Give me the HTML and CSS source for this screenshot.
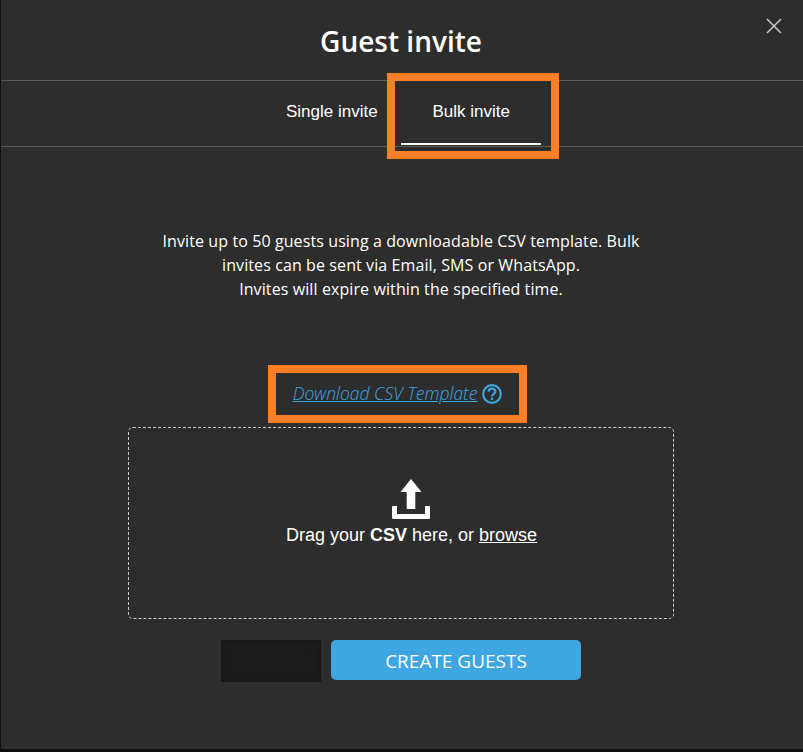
FILE: index.html
```html
<!DOCTYPE html>
<html lang="en">
<head>
    <meta charset="UTF-8">
    <title>Guest invite</title>
    <link rel="stylesheet" href="styles.css">
</head>
<body>
    <div class="modal">
        <button class="close" aria-label="Close">
            <svg width="16" height="16" viewBox="0 0 16 16"><path d="M1 1 L15 15 M15 1 L1 15" stroke="#c9c9c9" stroke-width="1.5" fill="none"/></svg>
        </button>
        <h2 class="title">Guest invite</h2>
        <div class="tabs">
            <a class="tab">Single invite</a>
            <a class="tab active">Bulk invite<span class="mark"></span></a>
        </div>
        <div class="intro">
            <p>Invite up to 50 guests using a downloadable CSV template. Bulk invites can be sent via Email, SMS or WhatsApp.</p>
            <p>Invites will expire within the specified time.</p>
        </div>
        <div class="template">
            <a class="template-link">Download CSV Template</a>
            <svg class="help" width="20" height="20" viewBox="0 0 20 20">
                <circle cx="10" cy="10" r="8.8" stroke="#3ea6e0" stroke-width="2.2" fill="none"/>
                <path d="M6.6 7.8 C6.6 3.5 13.4 3.7 13.4 7.6 C13.4 10 10 9.9 10 12.6" stroke="#3ea6e0" stroke-width="2.2" fill="none"/>
                <rect x="8.9" y="13.7" width="2.2" height="2.4" fill="#3ea6e0"/>
            </svg>
            <span class="mark"></span>
        </div>
        <div class="dropzone">
            <svg class="upload" width="38" height="40" viewBox="0 0 38 40">
                <path d="M19 0 L29.5 13 L23.3 13 L23.3 30 L14.7 30 L14.7 13 L8.5 13 Z" fill="#fff"/>
                <path d="M1 27 Q0 27 0 28 L0 38.5 Q0 40 1.5 40 L36.5 40 Q38 40 38 38.5 L38 28 Q38 27 37 27 L33 27 L33 35 L5 35 L5 27 Z" fill="#fff"/>
            </svg>
            <p class="drop-text">Drag your <b>CSV</b> here, or <u>browse</u></p>
        </div>
        <div class="actions">
            <div class="redacted"></div>
            <button class="primary">CREATE GUESTS</button>
        </div>
    </div>
</body>
</html>
```

FILE: styles.css
```css
html, body {
    margin: 0;
    height: 100%;
    background-color: #0f0f0f;
}
.modal {
    position: relative;
    box-sizing: border-box;
    height: 749px;
    margin-left: 1px;
    background-color: #2d2d2d;
    color: #fff;
    font-family: "Open Sans", sans-serif;
    overflow: hidden;
}
.close {
    position: absolute;
    top: 18px;
    right: 21px;
    padding: 0;
    background: none;
    border: none;
    line-height: 0;
}
.title {
    margin: 0;
    height: 80px;
    padding-right: 2px;
    line-height: 83px;
    text-align: center;
    font-size: 28px;
    font-weight: 600;
}
.tabs {
    display: flex;
    height: 65px;
    border-top: 1px solid #5a5a5a;
    border-bottom: 1px solid #5a5a5a;
    padding-left: 264px;
    font-family: "Liberation Sans", sans-serif;
    font-size: 17px;
}
.tab {
    position: relative;
    padding: 22px 19px 0 21px;
    line-height: 18px;
}
.tab.active {
    width: 140px;
    box-sizing: border-box;
    margin-left: 4px;
    text-align: center;
    padding: 22px 0 0 1px;
    border-bottom: 2px solid #fff;
    height: 64px;
}
.mark {
    position: absolute;
    border: 8px solid #ff7f27;
    pointer-events: none;
}
.tab .mark {
    top: -8px;
    left: -14px;
    right: -18px;
    bottom: -16px;
}
.intro {
    width: 490px;
    margin: 82px auto 0;
    padding-right: 2px;
    text-align: center;
    font-size: 16px;
    letter-spacing: 0.1px;
    line-height: 24px;
}
.intro p {
    margin: 0;
}
.template {
    position: relative;
    display: flex;
    align-items: center;
    justify-content: center;
    gap: 5px;
    width: 243px;
    height: 42px;
    margin: 72px 0 0 275px;
    color: #3ea6e0;
    font-size: 17.5px;
    font-style: italic;
    font-weight: 300;
}
.template-link {
    margin-bottom: 2px;
    text-decoration: underline;
}
.template .mark {
    inset: -8px;
}
.dropzone {
    box-sizing: border-box;
    width: 546px;
    height: 192px;
    margin: 12px 0 0 127px;
    padding: 51px 0 0 19px;
    border: 1px dashed #cfcfcf;
    border-radius: 5px;
    text-align: center;
}
.upload {
    display: block;
    margin: 0 auto;
}
.drop-text {
    margin: 6px 0 0;
    padding-left: 2px;
    font-family: "Liberation Sans", sans-serif;
    font-size: 18px;
    line-height: 20px;
}
.actions {
    display: flex;
    align-items: flex-start;
    gap: 10px;
    margin: 21px 0 0 220px;
}
.redacted {
    width: 100px;
    height: 42px;
    background-color: #1c1c1c;
    box-shadow: inset 0 0 8px #161616;
}
.primary {
    width: 250px;
    height: 40px;
    padding: 2px 0 0;
    background-color: #3ea6e0;
    border: none;
    border-radius: 5px;
    color: #fff;
    font-family: "Open Sans", sans-serif;
    font-size: 19px;
}
```
